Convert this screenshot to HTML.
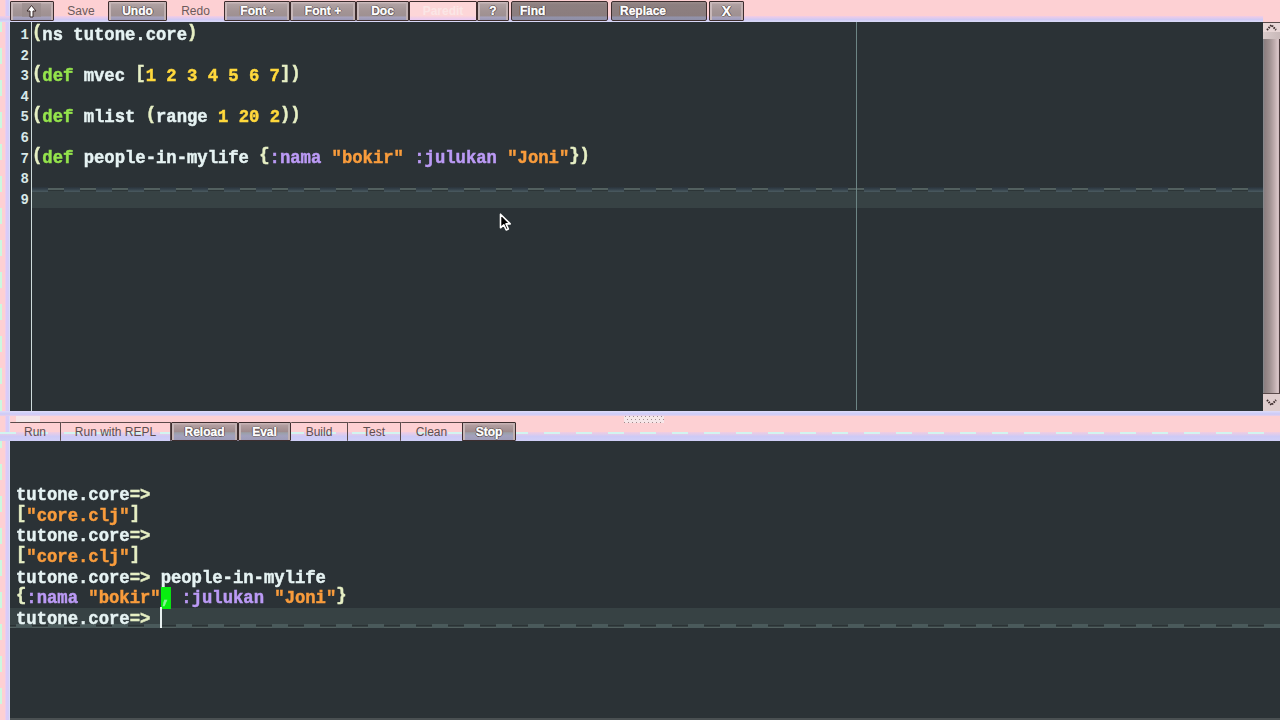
<!DOCTYPE html>
<html><head><meta charset="utf-8">
<style>
*{margin:0;padding:0;box-sizing:border-box}
html,body{width:1280px;height:720px;overflow:hidden;background:#fdd0d3;position:relative;font-family:"Liberation Sans",sans-serif}
.abs{position:absolute}
#lstrip{left:5px;top:0;width:5px;height:720px;background:linear-gradient(90deg,#f4d0e4,#dccaf8 30%,#d4cff8 70%,#e2e2f8)}
#lmint{left:0;top:0;width:2px;height:720px;background:repeating-linear-gradient(180deg,transparent 0 16px,#ccf8e0 16px 32px)}
#tb1band{left:0;top:16px;width:1263px;height:6px;background:linear-gradient(#f4cce4,#cfc9f4 60%,#dadcf8)}
#editor{left:10px;top:22px;width:1253px;height:389px;background:#2b3236}
#gutterline{left:31px;top:22px;width:1px;height:389px;background:#cfdcdc}
#margin{left:856px;top:22px;width:1px;height:388px;background:#6d8585}
#curline{left:32px;top:188px;width:1231px;height:20px;background:#374244}
#curart{left:32px;top:188px;width:1231px;height:4px;background:linear-gradient(90deg,transparent 0 16px,transparent 16px 32px)}
#curline2{left:10px;top:608px;width:1270px;height:20px;background:#374244}
#sb{left:1263px;top:22px;width:17px;height:389px;background:linear-gradient(90deg,#86878b 0,#86878b 4%,#8c7e7f 10%,#a09292 40%,#bcaaab 65%,#d8c5c7 88%,#d0bcbe 92%,#4a3a3c 96%)}
#sbup{left:1263px;top:22px;width:17px;height:10px;background:#e8d6d6;border-top:1px solid #5a4a4a}
#sbup2{left:1263px;top:32px;width:17px;height:7px;background:linear-gradient(90deg,#d9caca,#c9b9b9)}
#sbdn{left:1263px;top:393px;width:17px;height:18px;background:#e0cece;border-top:1px solid #5a4a4a}
#tb2band1{left:0;top:411px;width:1280px;height:5px;background:linear-gradient(#dfdcf8,#cbcaf8 60%,#e8d0e8)}
#tb2band2{left:0;top:432px;width:1280px;height:9px;background:linear-gradient(#f2cde0,#cdcaf6 50%,#d0cff7)}
#tb2mint{left:0;top:432px;width:1280px;height:2px;background:repeating-linear-gradient(90deg,#d2f4f0 0 16px,transparent 16px 32px)}
#repl{left:10px;top:441px;width:1270px;height:279px;background:#2b3236}
.code{position:absolute;font-family:"Liberation Mono",monospace;font-weight:bold;font-size:19px;line-height:20.6px;white-space:pre;transform:scaleX(0.906);transform-origin:0 0;color:#e6f3f3;-webkit-text-stroke:0.5px currentColor}
.ln{position:absolute;left:12px;width:17px;text-align:right;font-family:"Liberation Mono",monospace;font-weight:bold;font-size:14px;line-height:20.6px;color:#d8e8e8}
.p{color:#e6efc4}
.b{display:inline-block;transform:translateY(-2.5px) scaleY(0.97)}
.k{color:#94e44c}
.n{color:#ffd83c}
.kw{color:#bb9af5}
.s{color:#f99c3c}
.btn{position:absolute;top:1px;height:20px;border:1.5px solid #3d2d2e;border-radius:1px;background:linear-gradient(#d4c2c4 0,#b0a1a2 12%,#a39495 50%,#9f9192 75%,#a7a2bd 85%,#9a98b6 100%);color:#fff;font-weight:bold;font-size:12px;text-align:center;line-height:19px;text-shadow:1px 0 0 rgba(50,35,35,.75),-1px 0 0 rgba(50,35,35,.75),0 1px 0 rgba(50,35,35,.75),0 -1px 0 rgba(50,35,35,.6);-webkit-text-stroke:0.4px #fff;box-shadow:inset 2px 0 0 #c8b8b9,inset -2px 0 0 #c0b0b1}
.btn.off{background:transparent;border-color:transparent;color:#6b5b5c;font-weight:normal;text-shadow:none;box-shadow:none;-webkit-text-stroke:0}
.btn2{top:422px;height:19px;line-height:19px}
.btn2.off{border:none;border-top:1px solid #6e5658;border-right:1.5px solid #6e5658;color:#5f4f50;line-height:19px}
.btn2:not(.off){background:linear-gradient(#cdb8ba 0,#b09c9e 15%,#a08c8e 50%,#9aa0a8 58%,#a2a0bc 75%,#9e9cb8 100%)}
</style></head><body>
<div id="lstrip" class="abs"></div>
<div id="lmint" class="abs"></div>
<div id="tb1band" class="abs"></div>
<div id="editor" class="abs"></div>
<div id="curline" class="abs"></div>
<div class="abs" style="left:32px;top:188px;width:1231px;height:4px;background:repeating-linear-gradient(90deg,rgba(0,0,0,0) 0 16px,#52605f 16px 32px);-webkit-mask:linear-gradient(#000 0 2px,transparent 2px)"></div>
<div class="abs" style="left:32px;top:190px;width:1231px;height:1px;background:repeating-linear-gradient(90deg,rgba(0,0,0,0) 0 16px,#2c3537 16px 32px)"></div>
<div class="abs" style="left:32px;top:187px;width:1231px;height:5px;background:linear-gradient(#2a333a,#33404a 40%,#4b5b60);-webkit-mask-image:repeating-linear-gradient(90deg,#000 0 16px,transparent 16px 32px)"></div>
<div id="gutterline" class="abs"></div>
<div id="margin" class="abs"></div>
<div id="sb" class="abs"></div>
<div id="sbup" class="abs"></div>
<div id="sbup2" class="abs"></div>
<div id="sbdn" class="abs"></div>

<div class="btn" style="left:10px;width:44px"><svg width="41" height="17" style="position:absolute;left:0;top:0"><rect x="11" y="1" width="19" height="14" fill="#968889" opacity=".6"/><path d="M20.5 3.5 L25 9 L22 9 L22 15 L19 15 L19 9 L16 9 Z" fill="#fff" stroke="#3a2a2a" stroke-width="1"/></svg></div>
<div class="btn off" style="left:54px;width:54px">Save</div>
<div class="btn" style="left:108px;width:59px">Undo</div>
<div class="btn off" style="left:167px;width:57px">Redo</div>
<div class="btn" style="left:224px;width:66px">Font -</div>
<div class="btn" style="left:290px;width:66px">Font +</div>
<div class="btn" style="left:356px;width:53px">Doc</div>
<div class="btn off" style="left:409px;width:68px;color:#fbe6e6;font-weight:bold;border-color:#3d2d2e;background:linear-gradient(#fdd6d8 75%,#e8c9f2)">Paredit</div>
<div class="btn" style="left:477px;width:32px">?</div>
<div class="btn" style="left:511px;width:97px;text-align:left;padding-left:8px;border-radius:2px;background:linear-gradient(#9a8c8c,#8d7f80 15%,#8b7d7e 75%,#9292aa 85%,#8e8ea6);box-shadow:none">Find</div>
<div class="btn" style="left:611px;width:96px;text-align:left;padding-left:8px;border-radius:2px;background:linear-gradient(#9a8c8c,#8d7f80 15%,#8b7d7e 75%,#9292aa 85%,#8e8ea6);box-shadow:none">Replace</div>
<div class="btn" style="left:709px;width:35px;font-size:14px">X</div>

<div class="ln" style="top:25px">1<br>2<br>3<br>4<br>5<br>6<br>7<br>8<br>9</div>
<div class="code" style="left:31.8px;top:24.6px"><span class="p b">(</span>ns tutone.core<span class="p b">)</span>

<span class="p b">(</span><span class="k">def</span> mvec <span class="p b">[</span><span class="n">1 2 3 4 5 6 7</span><span class="p b">]</span><span class="p b">)</span>

<span class="p b">(</span><span class="k">def</span> mlist <span class="p b">(</span>range <span class="n">1 20 2</span><span class="p b">)</span><span class="p b">)</span>

<span class="p b">(</span><span class="k">def</span> people-in-mylife <span class="p b">{</span><span class="kw">:nama</span> <span class="s">"bokir"</span> <span class="kw">:julukan</span> <span class="s">"Joni"</span><span class="p b">}</span><span class="p b">)</span>

</div>

<div id="tb2band1" class="abs"></div>
<div id="tb2band2" class="abs"></div>
<div class="abs" style="left:16px;top:416px;width:24px;height:6px;background:#f4e6e8"></div>
<div id="tb2mint" class="abs"></div>
<div class="btn btn2 off" style="left:10px;width:51px;border-color:#5a4a4a;border-top-color:#5a4a4a">Run</div>
<div class="btn btn2 off" style="left:61px;width:110px;border-color:#5a4a4a">Run with REPL</div>
<div class="btn btn2" style="left:171px;width:67px">Reload</div>
<div class="btn btn2" style="left:238px;width:53px">Eval</div>
<div class="btn btn2 off" style="left:291px;width:57px;border-color:#5a4a4a">Build</div>
<div class="btn btn2 off" style="left:348px;width:53px;border-color:#5a4a4a">Test</div>
<div class="btn btn2 off" style="left:401px;width:62px;border-color:#5a4a4a">Clean</div>
<div class="btn btn2" style="left:462px;width:54px">Stop</div>

<div id="repl" class="abs"></div>
<div class="abs" style="left:10px;top:718px;width:1270px;height:2px;background:#4a5052"></div>
<div id="curline2" class="abs"></div>
<div class="abs" style="left:10px;top:624px;width:1270px;height:4px;background:#4a5a5b;-webkit-mask-image:repeating-linear-gradient(90deg,transparent 0 6px,#000 6px 22px,transparent 22px 32px)"></div>
<div class="abs" style="left:10px;top:625px;width:1270px;height:1px;background:#2b3335;-webkit-mask-image:repeating-linear-gradient(90deg,#000 0 6px,transparent 6px 22px,#000 22px 32px)"></div>
<div class="abs" style="left:10px;top:627px;width:1270px;height:1px;background:#52605f;-webkit-mask-image:repeating-linear-gradient(90deg,#000 0 6px,transparent 6px 22px,#000 22px 32px)"></div>
<div class="code" style="left:16px;top:485.3px">tutone.core<span class="p">=&gt;</span>
<span class="p b">[</span><span class="s">"core.clj"</span><span class="p b">]</span>
tutone.core<span class="p">=&gt;</span>
<span class="p b">[</span><span class="s">"core.clj"</span><span class="p b">]</span>
tutone.core<span class="p">=&gt;</span> people-in-mylife
<span class="p b">{</span><span class="kw">:nama</span> <span class="s">"bokir"</span><span style="background:#08ee10;color:#8af59a">,</span> <span class="kw">:julukan</span> <span class="s">"Joni"</span><span class="p b">}</span>
tutone.core<span class="p">=&gt;</span> </div>
<div class="abs" style="left:160px;top:607px;width:2px;height:21px;background:#e8f0f0"></div>

<svg class="abs" style="left:1263px;top:22px" width="17" height="10"><path d="M4 8 L8.5 3 L13 8" stroke="#3a2a2a" stroke-width="2" fill="none" stroke-dasharray="1.5 1"/></svg>
<svg class="abs" style="left:1263px;top:394px" width="17" height="17"><path d="M4 6 L8.5 11 L13 6" stroke="#3a2a2a" stroke-width="2" fill="none" stroke-dasharray="1.5 1"/></svg>
<svg class="abs" style="left:624px;top:416px" width="40" height="8"><rect x="0" y="0" width="40" height="7" fill="#f6e6e8"/><g fill="#a08a8c"><rect x="1" y="0" width="1" height="1"/><rect x="5" y="0" width="1" height="1"/><rect x="9" y="0" width="1" height="1"/><rect x="13" y="0" width="1" height="1"/><rect x="17" y="0" width="1" height="1"/><rect x="21" y="0" width="1" height="1"/><rect x="25" y="0" width="1" height="1"/><rect x="29" y="0" width="1" height="1"/><rect x="33" y="0" width="1" height="1"/><rect x="37" y="0" width="1" height="1"/><rect x="3" y="3" width="1" height="1"/><rect x="7" y="3" width="1" height="1"/><rect x="11" y="3" width="1" height="1"/><rect x="15" y="3" width="1" height="1"/><rect x="19" y="3" width="1" height="1"/><rect x="23" y="3" width="1" height="1"/><rect x="27" y="3" width="1" height="1"/><rect x="31" y="3" width="1" height="1"/><rect x="35" y="3" width="1" height="1"/><rect x="39" y="3" width="1" height="1"/><rect x="0" y="6" width="1" height="1"/><rect x="4" y="6" width="1" height="1"/><rect x="8" y="6" width="1" height="1"/><rect x="12" y="6" width="1" height="1"/><rect x="16" y="6" width="1" height="1"/><rect x="20" y="6" width="1" height="1"/><rect x="24" y="6" width="1" height="1"/><rect x="28" y="6" width="1" height="1"/><rect x="32" y="6" width="1" height="1"/><rect x="36" y="6" width="1" height="1"/></g></svg>
<svg class="abs" style="left:499px;top:213px" width="14" height="20"><path d="M1.5 1.2 L1.5 14.8 L4.8 11.8 L7.2 17 L9.4 16 L7 10.9 L11.2 10.9 Z" fill="#000" stroke="#fff" stroke-width="1.6" stroke-linejoin="round"/></svg>
</body></html>
